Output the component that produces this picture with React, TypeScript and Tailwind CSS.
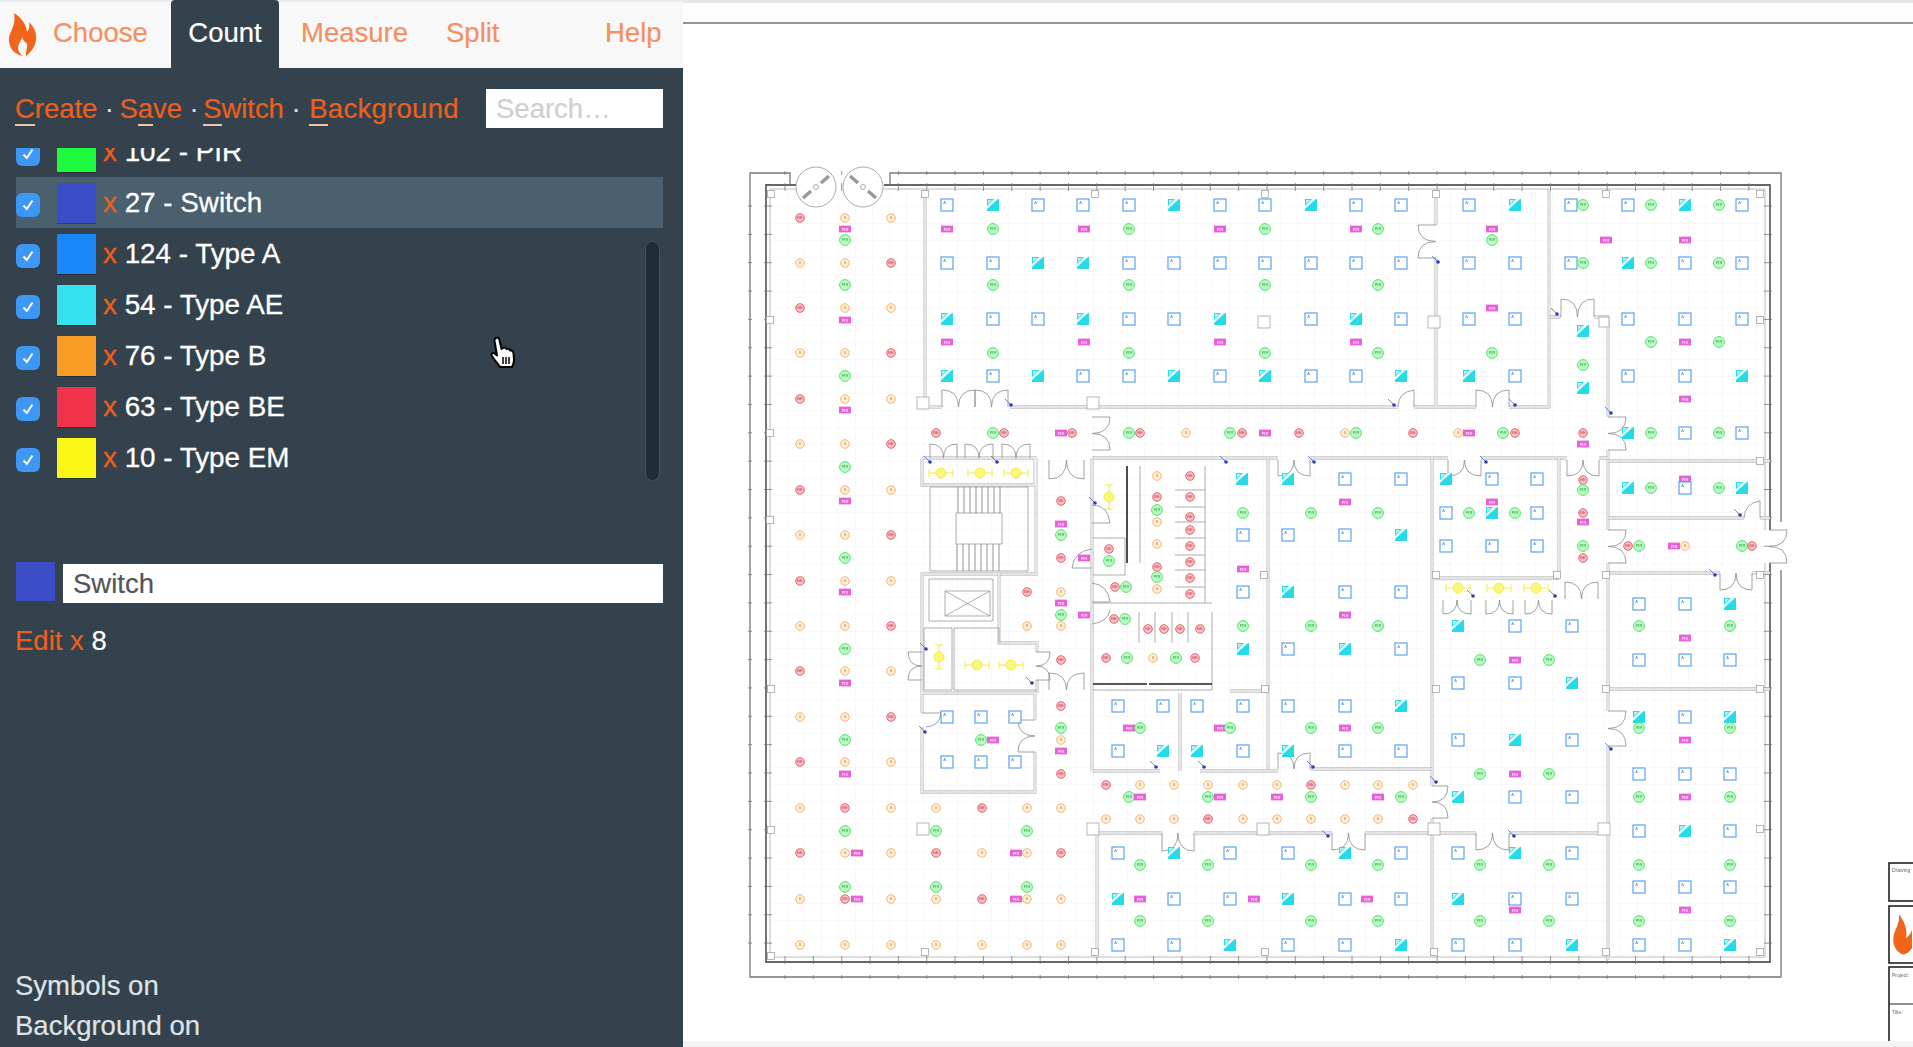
import type { ReactNode } from "react";

const ORANGE = "#ee5f1b";

type ListItem = { count: number; name: string; color: string; active?: boolean };

const ITEMS: ListItem[] = [
  { count: 102, name: "PIR", color: "#1ffb3c" },
  { count: 27, name: "Switch", color: "#3b4ec8", active: true },
  { count: 124, name: "Type A", color: "#1a86f8" },
  { count: 54, name: "Type AE", color: "#33e4ee" },
  { count: 76, name: "Type B", color: "#f99c25" },
  { count: 63, name: "Type BE", color: "#f0324b" },
  { count: 10, name: "Type EM", color: "#fcf615" },
];

// plan symbols, one row per y: letter = type, number = x
// A = Type A, E = Type AE, B = Type B, R = Type BE, P = PIR, T = PIR tag
const SYMBOLS: [number, string][] = [
  [205, "A947 E993 A1038 A1083 A1129 E1174 A1220 A1265 E1311 A1356 A1401 A1469 E1515 A1571 P1583 A1628 P1651 E1685 P1719 A1742"],
  [218, "R800 B845 B891"],
  [229, "T845 T947 P993 T1084 P1129 T1220 P1265 T1356 P1378 T1492"],
  [240, "P845 P1492 T1606 T1685"],
  [263, "B800 B845 R891 A947 A993 E1038 E1083 A1129 A1174 A1220 A1265 A1311 A1356 A1401 A1469 A1515 A1571 P1583 E1628 P1651 A1685 P1719 A1742"],
  [285, "P845 P993 P1129 P1265 P1378"],
  [308, "R800 B845 B891 T1492"],
  [319, "E947 A993 A1038 E1083 A1129 A1174 E1220 A1311 E1356 A1401 A1469 A1515 A1628 A1685 A1742"],
  [320, "T845"],
  [331, "E1583"],
  [342, "T947 T1084 T1220 T1356 P1651 T1685 P1719"],
  [353, "B800 B845 R891 P993 P1129 P1265 P1378 P1492"],
  [365, "P1583"],
  [376, "P845 E947 A993 E1038 A1083 A1129 E1174 A1220 E1265 A1311 A1356 E1401 E1469 A1515 A1628 A1685 E1742"],
  [388, "E1583"],
  [399, "R800 B845 B891 T1685"],
  [410, "T845"],
  [433, "R936 P993 R1004 T1061 R1072 P1129 R1140 B1186 P1230 R1242 T1265 R1299 B1345 P1356 R1413 B1458 T1469 P1503 R1515 R1583 E1628 P1651 A1685 P1719 A1742"],
  [444, "B800 B845 R891 T1583"],
  [467, "P845"],
  [476, "B1157 R1190"],
  [479, "T1685 E1242 E1288 A1345 A1401 E1446 A1492 A1537"],
  [480, "R1583"],
  [488, "E1628 P1651 A1685 P1719 E1742"],
  [490, "R800 B845 B891 P1583"],
  [497, "R1190 R1157"],
  [501, "R1061 T845"],
  [502, "T1345 T1492"],
  [510, "P1157"],
  [513, "P1243 P1311 P1378 A1446 P1469 E1492 P1515 A1537 R1583"],
  [517, "R1190"],
  [522, "B1157 T1583"],
  [524, "T1061"],
  [530, "R1190"],
  [535, "B800 B845 R891 P1061 A1243 A1288 A1345 E1401"],
  [544, "B1157"],
  [546, "R1190 A1446 A1492 A1537 P1583 R1628 P1639 T1674 B1685 P1742 R1752"],
  [549, "R1109"],
  [558, "P845 R1061 T1084 R1583"],
  [561, "P1109"],
  [562, "R1190"],
  [567, "R1157"],
  [569, "T1243"],
  [577, "P1157"],
  [578, "R1190"],
  [581, "R800 B845 B891"],
  [587, "R1115 P1126"],
  [589, "B1157"],
  [592, "T845 R1027 B1061 A1243 E1288 A1345 A1401"],
  [594, "R1190"],
  [603, "T1061"],
  [604, "A1639 A1685 E1730"],
  [615, "P1061 T1084 T1345"],
  [619, "R1114 P1125"],
  [626, "B800 B845 R891 B1027 B1061 P1243 P1311 P1378 E1458 A1515 A1572 P1639 P1730"],
  [629, "R1148 R1164 R1180 R1200"],
  [638, "T1685"],
  [649, "P845 E1243 A1288 E1345 A1401"],
  [658, "R1106 P1127 B1153 P1176 R1195"],
  [660, "R1061 P1480 T1515 P1549 A1639 A1685 A1730"],
  [671, "R800 B845 B891"],
  [683, "T845 A1458 A1515 E1572"],
  [706, "R1061 A1118 A1163 A1197 A1243 A1288 A1345 E1401"],
  [717, "B800 B845 R891 A947 A981 A1015 E1639 A1685 E1730"],
  [728, "P1061 T1129 P1140 T1220 P1230 P1311 T1345 P1378 P1639 P1730"],
  [740, "P845 P981 T993 B1061 A1458 E1515 A1572 T1685"],
  [751, "A1118 E1163 E1197 T1061 A1243 E1288 A1345 A1401"],
  [762, "R800 B845 B891 A947 A981 A1015"],
  [774, "T845 R1061 P1480 T1515 P1549 A1639 A1685 A1730"],
  [785, "R1106 B1140 B1174 B1208 B1243 B1277 R1311 B1345 B1378 B1413"],
  [797, "P1129 T1140 P1208 T1220 T1277 P1311 T1378 P1401 E1458 A1515 A1572 P1639 T1685 P1730"],
  [808, "B800 R845 B891 B936 R982 B1027 B1061"],
  [819, "B1106 B1140 B1174 R1208 B1243 B1277 B1311 B1345 B1378 R1413"],
  [831, "P845 P936 P1027 A1639 E1685 A1730"],
  [853, "R800 B845 T857 B891 R936 B982 T1016 B1027 R1061 A1118 E1174 A1230 A1288 E1345 A1401 A1458 E1515 A1572"],
  [865, "P1140 P1208 P1311 P1378 P1480 P1549 P1639 P1730"],
  [887, "P845 P936 P1027 A1639 A1685 A1730"],
  [899, "B800 R845 T857 B891 B936 R982 T1016 B1027 B1061 E1118 T1140 A1174 A1230 T1254 E1288 A1345 T1367 A1401 E1458 A1515 A1572"],
  [910, "T1515 T1685"],
  [921, "P1140 P1208 P1311 P1378 P1480 P1549 P1639 P1730"],
  [945, "B800 B845 B891 B936 B982 B1027 B1061 A1118 A1174 E1230 A1288 A1345 E1401 A1458 A1515 E1572 A1639 A1685 E1730"],
];

// door leaves: two hinges on the wall, then which way they swing and how far
const DOORS: [number, number, number, number, number, number, number][] = [
  [942, 407, 975, 407, 0, -1, 17],
  [975, 407, 1008, 407, 0, -1, 17],
  [1092, 417, 1092, 450, 1, 0, 18],
  [930, 458, 957, 458, 0, -1, 14],
  [965, 458, 993, 458, 0, -1, 14],
  [1002, 458, 1030, 458, 0, -1, 14],
  [1049, 460, 1084, 460, 0, 1, 19],
  [1436, 225, 1436, 258, -1, 0, 18],
  [1476, 407, 1509, 407, 0, -1, 17],
  [1561, 317, 1594, 317, 0, -1, 18],
  [1608, 417, 1608, 450, 1, 0, 18],
  [1278, 460, 1310, 460, 0, 1, 16],
  [1448, 460, 1481, 460, 0, 1, 16],
  [1567, 460, 1599, 460, 0, 1, 16],
  [922, 652, 922, 680, -1, 0, 14],
  [1036, 652, 1036, 680, 1, 0, 14],
  [1049, 690, 1084, 690, 0, -1, 17],
  [1035, 720, 1035, 752, -1, 0, 17],
  [1608, 530, 1608, 563, 1, 0, 18],
  [1720, 573, 1752, 573, 0, 1, 17],
  [1769, 530, 1769, 563, 1, 0, 18],
  [1443, 600, 1471, 600, 0, 1, 14],
  [1486, 600, 1513, 600, 0, 1, 14],
  [1525, 600, 1552, 600, 0, 1, 14],
  [1565, 599, 1598, 599, 0, -1, 17],
  [1278, 769, 1310, 769, 0, -1, 16],
  [1432, 786, 1432, 818, 1, 0, 16],
  [1162, 833, 1194, 833, 0, 1, 18],
  [1332, 833, 1365, 833, 0, 1, 17],
  [1476, 833, 1509, 833, 0, 1, 17],
  [1608, 711, 1608, 746, 1, 0, 18],
];

const SWITCHES = [
  [1011, 405], [930, 462], [997, 462], [1226, 462], [1438, 262], [1557, 314], [1394, 405], [1515, 405],
  [1611, 413], [1314, 462], [1486, 462], [1095, 503], [926, 649], [1032, 683], [925, 732], [1156, 767],
  [1204, 767], [1740, 515], [1715, 575], [1473, 596], [1555, 596], [1611, 749], [1313, 767], [1436, 782],
  [1328, 836], [1514, 836],
];

const COLUMNS: [number, number, number][] = [
  [771, 194, 7], [925, 194, 7], [1095, 194, 7], [1265, 194, 7], [1436, 194, 7], [1606, 194, 7], [1760, 194, 7],
  [923, 403, 12], [1093, 403, 12], [1264, 322, 12], [1434, 322, 12], [1604, 322, 10],
  [770, 320, 7], [770, 433, 7], [1760, 320, 7], [1760, 461, 7], [770, 520, 7], [771, 689, 7], [771, 830, 7],
  [923, 829, 12], [1093, 829, 12], [1263, 829, 12], [1434, 829, 12], [1604, 829, 12], [1760, 829, 7],
  [771, 956, 7], [925, 952, 7], [1095, 952, 7], [1265, 952, 7], [1434, 952, 7], [1606, 952, 7], [1760, 952, 7],
  [1264, 575, 7], [1436, 575, 7], [1557, 575, 7], [1606, 575, 7], [1760, 575, 7],
  [1265, 689, 7], [1436, 689, 7], [1606, 689, 7], [1760, 689, 7],
];

const WALLS = [
  "M925 189V398M930 407H942M1010 407H1398M1414 407H1476M1509 407H1549V189M1436 189V225M1436 258V407",
  "M1549 317H1561M1594 317H1608V417M1608 450V530M1608 563V711M1608 746V960",
  "M1608 461H1770M1608 518H1744M1760 518H1770M1608 573H1720M1752 573H1770M1608 689H1770",
  "M1092 458H1278M1310 458H1448M1481 458H1567M1599 458H1608",
  "M1432 458V786M1432 818V957M1268 458V769M1559 458V578M1435 578H1559M1230 691H1268",
  "M1092 771H1160M1200 771H1278M1310 769H1432M1092 458V771",
  "M1097 833H1162M1194 833H1332M1365 833H1476M1509 833H1608M1097 833V957",
  "M922 458V485H1035V458H922M1036 458V574H922V693H1036M922 693V713M922 727V792H1035V752M1035 720V693",
  "M999 574V643H1037V652M1037 680V693M1180 693V771",
];

const THIN_LINES =
  "M1205 466V603M1093 603H1212M1140 466V563M1175 490H1205M1175 507H1205M1175 522H1205M1175 538H1205M1175 555H1205M1175 570H1205M1175 587H1205" +
  "M1139 612V643M1155 612V643M1172 612V643M1188 612V643M1212 612V690M1093 690H1212M1093 538H1125V575M1093 575H1125" +
  "M930 487H1028V571H930ZM956 513H1002V544H956ZM929 579H993V621H929ZM945 591H990V616H945ZM945 591L990 616M990 591L945 616" +
  "M924 628H952V690H924ZM954 628H999V643M954 628V690H1037";

function Door({ d }: { d: [number, number, number, number, number, number, number] }) {
  const [ax, ay, bx, by, nx, ny, depth] = d;
  const cx = (ax + bx) / 2;
  const cy = (ay + by) / 2;
  const fax = ax + nx * depth;
  const fay = ay + ny * depth;
  const fbx = bx + nx * depth;
  const fby = by + ny * depth;
  const path = `M${ax} ${ay}L${fax} ${fay}Q${fax + cx - ax} ${fay + cy - ay} ${cx} ${cy}Q${fbx + cx - bx} ${fby + cy - by} ${fbx} ${fby}L${bx} ${by}`;
  return <path d={path} fill="none" stroke="#8a8a8a" strokeWidth="0.8" />;
}

function Symbol({ kind, x, y }: { kind: string; x: number; y: number }) {
  const tiny = { fontSize: 4, textAnchor: "middle" as const, fontFamily: "'Liberation Sans', sans-serif" };
  if (kind === "A") {
    return (
      <g>
        <rect x={x - 6} y={y - 6} width="12" height="12" fill="#fff" stroke="#5aa3f0" strokeWidth="1.2" />
        <text x={x - 2.5} y={y - 1.5} fill="#3f7fd8" {...tiny}>A</text>
      </g>
    );
  }
  if (kind === "E") {
    return (
      <g>
        <rect x={x - 6} y={y - 6} width="12" height="12" fill="#25dbe8" />
        <path d={`M${x - 6} ${y + 4}V${y + 1}L${x + 1} ${y - 6}H${x + 5}Z`} fill="#e8fcfd" />
        <path d={`M${x - 5} ${y - 5}H${x - 1}L${x - 5} ${y - 1}Z`} fill="#b8f3f7" />
      </g>
    );
  }
  if (kind === "T") {
    return (
      <g>
        <rect x={x - 6} y={y - 3.4} width="12" height="6.8" fill="#e861d6" />
        <text x={x} y={y + 1.5} fill="#fff" {...tiny}>PIR</text>
      </g>
    );
  }
  if (kind === "P") {
    return (
      <g>
        <circle cx={x} cy={y} r="5.4" fill="#bdf9c6" stroke="#4fe666" strokeWidth="1" />
        <text x={x} y={y + 1.4} fill="#1f9f36" {...tiny}>PIR</text>
      </g>
    );
  }
  const red = kind === "R";
  return (
    <g>
      <circle cx={x} cy={y} r="4.3" fill={red ? "#f9c2c7" : "#ffeeda"} stroke={red ? "#e8505e" : "#f6ae60"} strokeWidth="0.9" />
      <text x={x} y={y + 1.4} fill={red ? "#c8313f" : "#e0933c"} {...tiny}>{red ? "BE" : "B"}</text>
    </g>
  );
}

function Lamp({ x, y, vertical }: { x: number; y: number; vertical?: boolean }) {
  return (
    <g stroke="#f5ee3a" strokeWidth="1">
      {vertical ? (
        <path d={`M${x} ${y - 12}V${y + 12}M${x - 4} ${y - 12}H${x + 4}M${x - 4} ${y + 12}H${x + 4}`} />
      ) : (
        <path d={`M${x - 12} ${y}H${x + 12}M${x - 12} ${y - 4}V${y + 4}M${x + 12} ${y - 4}V${y + 4}`} />
      )}
      <circle cx={x} cy={y} r="5" fill="#fbf77e" />
    </g>
  );
}

function Flame({ className }: { className: string }) {
  return (
    <svg viewBox="0 0 28 44" className={className}>
      <path
        fill="#f0641c"
        d="M5 0C10 3 17 9 18 19C20 17 21 13 20 9C25 14 28 20 27 27C26 34 22 39 17 43C16 39 19 35 18 31C16 28 13 27 13 23C13 28 9 30 9 35C9 38 11 41 14 43C9 42 4 39 2 35C0 31 -1 26 1 21C3 16 7 9 5 0Z"
      />
    </svg>
  );
}

function Plan() {
  const ticks: ReactNode[] = [];
  for (let x = 785; x < 1770; x += 28.35) {
    ticks.push(<path key={`t${x}`} d={`M${x} 171V175M${x} 183V191M${x} 975V979M${x} 956V964`} stroke="#777" strokeWidth="0.8" />);
  }
  for (let y = 206; y < 960; y += 28.35) {
    ticks.push(<path key={`l${y}`} d={`M748 ${y}H752M764 ${y}H772M1764 ${y}H1772`} stroke="#777" strokeWidth="0.8" />);
  }

  return (
    <svg viewBox="683 24 1230 1023" className="block h-[1023px] w-[1230px] blur-[0.35px]">
      <defs>
        <pattern id="plan-grid" x="770" y="189" width="17" height="17" patternUnits="userSpaceOnUse">
          <path d="M17 0H0V17" fill="none" stroke="#ececec" strokeWidth="0.7" />
        </pattern>
      </defs>
      <rect x="770" y="189" width="995" height="768" fill="url(#plan-grid)" />

      <path d="M790 185V173H750V977H1781V570M1781 522V173H890V185" fill="none" stroke="#777" strokeWidth="1.3" />
      <path d="M796 185H766V962H1770V563M1770 530V185H884" fill="none" stroke="#666" strokeWidth="1.8" />
      <path d="M796 189H770V957H1765V563M1765 530V189H884" fill="none" stroke="#d4d4d4" strokeWidth="1.5" />
      {ticks}

      {[816, 863].map((cx, i) => {
        const s = i === 0 ? -1 : 1;
        return (
          <g key={cx} fill="#fff" stroke="#aaa" strokeWidth="1">
            <circle cx={cx} cy="187" r="20" />
            <path
              d={`M${cx - 13} ${187 + s * -11}L${cx - 5} ${187 + s * -4}M${cx + 5} ${187 + s * 4}L${cx + 13} ${187 + s * 11}`}
              stroke="#999"
              strokeWidth="3.5"
            />
            <circle cx={cx} cy="187" r="2.5" />
          </g>
        );
      })}

      {WALLS.map((d) => (
        <g key={d} fill="none">
          <path d={d} stroke="#a8a8a8" strokeWidth="2.8" />
          <path d={d} stroke="#f8f8f8" strokeWidth="1.5" />
        </g>
      ))}
      <path d={THIN_LINES} fill="none" stroke="#999" strokeWidth="0.8" />
      {Array.from({ length: 8 }, (_, i) => (
        <path key={i} d={`M${958 + i * 6} 487V513M${957 + i * 6} 544V571`} stroke="#888" strokeWidth="0.9" />
      ))}
      <path d="M1127 466V563M1093 684H1147M1149 684H1212" stroke="#222" strokeWidth="1.6" />

      {DOORS.map((d) => (
        <Door key={d.join()} d={d} />
      ))}
      <path
        d="M1414 407V390Q1398 392 1398 407M1092 523H1110Q1108 505 1092 505M1092 549Q1074 551 1072 568H1092M1092 583Q1108 585 1110 602H1092M1092 624Q1108 622 1110 610M922 713H941Q940 726 926 727M1760 518V501Q1745 503 1744 518"
        fill="none"
        stroke="#8a8a8a"
        strokeWidth="0.8"
      />

      {COLUMNS.map(([x, y, s]) => (
        <rect key={`${x}-${y}`} x={x - s / 2} y={y - s / 2} width={s} height={s} fill="#fff" stroke="#a5a5a5" strokeWidth="0.8" />
      ))}

      {SYMBOLS.flatMap(([y, row]) =>
        row.split(" ").map((token) => (
          <Symbol key={`${y}-${token}`} kind={token[0]} x={Number(token.slice(1))} y={y} />
        )),
      )}

      {[[941, 473], [980, 473], [1016, 473], [977, 665], [1011, 665], [1458, 588], [1499, 588], [1536, 588]].map(([x, y]) => (
        <Lamp key={`${x}-${y}`} x={x} y={y} />
      ))}
      <Lamp x={1109} y={497} vertical />
      <Lamp x={939} y={657} vertical />

      {SWITCHES.map(([x, y]) => (
        <g key={`${x}-${y}`}>
          <path d={`M${x - 6} ${y - 6}L${x} ${y}`} stroke="#3b4ec8" strokeWidth="0.7" />
          <circle cx={x} cy={y} r="1.8" fill="#2c3cb8" />
        </g>
      ))}

      <g fill="#fff" stroke="#222" strokeWidth="1.6">
        <rect x="1889" y="863" width="40" height="38" />
        <rect x="1889" y="906" width="40" height="57" />
        <rect x="1889" y="967" width="40" height="75" />
      </g>
      <path d="M1889 1004H1913" stroke="#222" strokeWidth="1" />
      <g fontSize="5" fill="#666" fontFamily="'Liberation Sans', sans-serif">
        <text x="1892" y="872">Drawing</text>
        <text x="1892" y="977">Project:</text>
        <text x="1892" y="1014">Title:</text>
      </g>
      <path
        fill="#f0641c"
        d="M1899 914C1903 920 1908 928 1906 938C1909 936 1911 933 1912 930V948C1908 954 1903 956 1900 953C1894 949 1892 942 1894 934C1896 928 1900 922 1899 914Z"
      />
      <rect x="683" y="1041" width="1230" height="6" fill="#f3f3f3" />
    </svg>
  );
}

function HandCursor() {
  return (
    <svg viewBox="0 0 28 32" className="absolute left-[488px] top-[336px] h-8 w-[30px]">
      <path
        d="M7 2C9 1 10 2 10.5 4L12.5 13L14 12C16 11 17 12 17.5 13C19 12.5 20.5 13 21 14.5C22.5 14 24 15 24.5 17L25 24C25 27 24 29 23 31H11C9 28 6 25 3 20C2 18 3 16.5 5 17L8 19.5L5.5 5C5.3 3.5 6 2.5 7 2Z"
        fill="#fff"
        stroke="#000"
        strokeWidth="2"
        strokeLinejoin="round"
      />
      <path d="M14 21V28M17 21V28M20 21V28" stroke="#000" strokeWidth="1.5" />
    </svg>
  );
}

function ActionLink({ before, mark, after, className }: { before?: string; mark: string; after: string; className?: string }) {
  return (
    <span className={`text-[#ee5f1b] ${className ?? ""}`}>
      {before}
      <span className="border-b-2 border-[#f3c5a8]">{mark}</span>
      {after}
    </span>
  );
}

function Row({ item }: { item: ListItem }) {
  return (
    <div className={`flex h-[51px] items-center ${item.active ? "bg-[#4a606f]" : ""}`}>
      <span className="mt-1 flex h-6 w-6 items-center justify-center rounded-md bg-[#3d97f5]">
        <svg viewBox="0 0 16 16" className="h-4 w-4">
          <path d="M3.5 8.5L6.8 12L12.5 3.5" fill="none" stroke="#fff" strokeWidth="2" />
        </svg>
      </span>
      <span className="ml-[17px] h-10 w-[39px] shadow-[0_1px_0_rgba(0,0,0,0.3)]" style={{ backgroundColor: item.color }} />
      <span className="ml-[7px] whitespace-pre text-[27.8px] text-white [-webkit-text-stroke:0.3px_currentColor]">
        <span style={{ color: ORANGE }}>x</span> {item.count} - {item.name}
      </span>
    </div>
  );
}

export default function App() {
  return (
    <div className="relative flex h-[1047px] w-[1913px] overflow-hidden bg-white font-['Liberation_Sans',Arial,sans-serif] text-[27.5px] leading-[32px]">
      <aside className="flex h-full w-[683px] shrink-0 flex-col bg-[#33424c] [-webkit-text-stroke:0.2px_currentColor]">
        <nav className="relative flex h-[68px] shrink-0 items-stretch bg-[#f8f8f8] pb-[2px] text-[#f58f62] shadow-[inset_0_3px_3px_-2px_rgba(0,0,0,0.1)]">
          <Flame className="absolute left-[9px] top-[13px] h-[44px] w-[28px]" />
          <a className="ml-[53px] flex w-[118px] items-center">Choose</a>
          <a className="z-10 -mb-[4px] flex w-[108px] items-center justify-center rounded-t bg-[#33424c] pb-[4px] text-white">Count</a>
          <a className="ml-[22px] flex w-[145px] items-center">Measure</a>
          <a className="flex w-[159px] items-center">Split</a>
          <a className="flex items-center">Help</a>
        </nav>

        <div className="ml-[15px] mr-5 flex h-[80px] shrink-0 items-start justify-between pt-[21px]">
          <div className="mt-[4px] whitespace-pre tracking-[-0.06px] text-[#d8dde0]">
            <ActionLink mark="C" after="reate" /> · <ActionLink before="S" mark="a" after="ve" className="-ml-[2px]" /> · <ActionLink mark="S" after="witch" className="-ml-[3px]" /> · <ActionLink mark="B" after="ackground" className="ml-px tracking-[0.3px]" />
          </div>
          <input
            readOnly
            placeholder="Search…"
            className="h-[39px] w-[177px] rounded-none bg-white px-2.5 text-[#555] outline-none placeholder:text-[#cfcfcf]"
          />
        </div>

        <div className="relative ml-4 mr-5 h-[333px] shrink-0 overflow-hidden">
          <div className="-mt-[22px]">
            {ITEMS.map((item) => (
              <Row key={item.name} item={item} />
            ))}
          </div>
        </div>

        <div className="ml-4 mr-5 mt-[81px] flex items-start">
          <span className="h-[39px] w-[39px] shrink-0 bg-[#3b4ec8]" />
          <input
            readOnly
            value="Switch"
            className="ml-[8px] mt-[2px] h-[39px] min-w-0 flex-1 rounded-none bg-white px-2.5 text-[#555] outline-none"
          />
        </div>

        <div className="ml-[15px] mt-[22px] text-white">
          <span style={{ color: ORANGE }}>Edit x</span> 8
        </div>

        <div className="ml-[15px] mt-auto pb-px leading-[40px] text-[#dfe3e6]">
          <div>Symbols on</div>
          <div>Background on</div>
        </div>
      </aside>

      <main className="flex min-w-0 flex-1 flex-col">
        <div className="h-[22px] shrink-0 border-t-[3px] border-[#e6e6e6] bg-[#fdfdfd]" />
        <div className="h-[2px] shrink-0 bg-[#969696]" />
        <Plan />
      </main>

      <div className="absolute left-[645px] top-[241px] h-[240px] w-[15px] rounded-full border border-[#44535d] bg-[#1f2d35]" />
      <HandCursor />
    </div>
  );
}
